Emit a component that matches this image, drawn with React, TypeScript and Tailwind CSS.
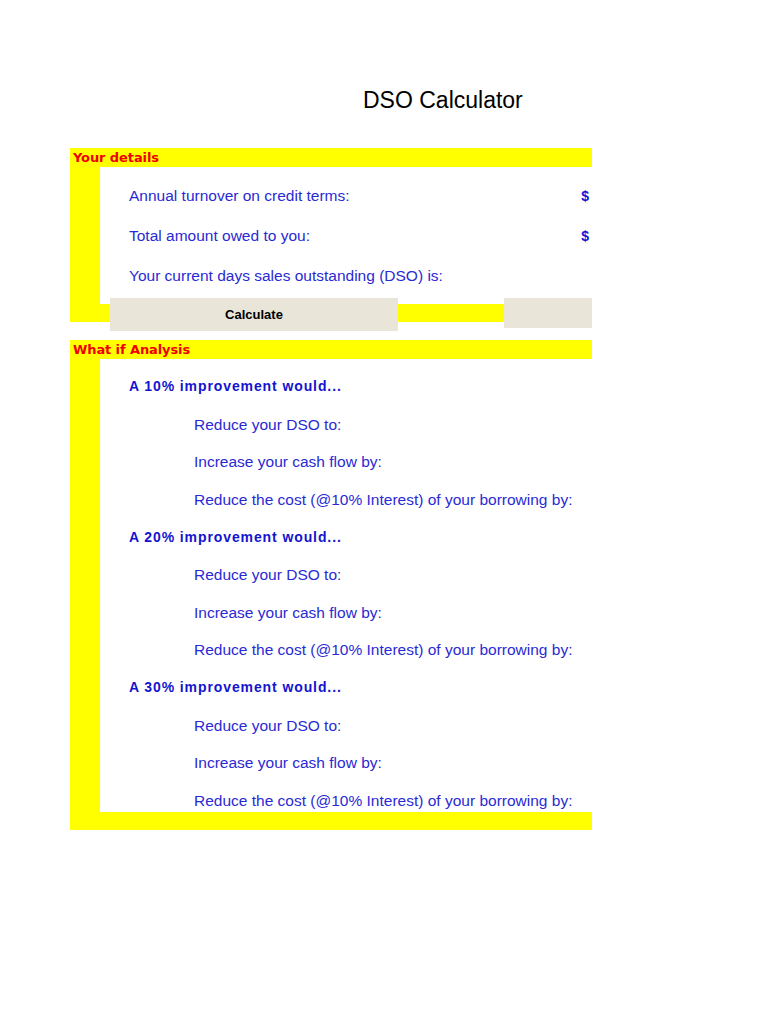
import React from "react";

const detailRows = [
  { label: "Annual turnover on credit terms:", dollar: true },
  { label: "Total amount owed to you:", dollar: true },
  { label: "Your current days sales outstanding (DSO) is:", dollar: false },
];

const improvements = ["10%", "20%", "30%"];

const outcomeRows = [
  "Reduce your DSO to:",
  "Increase your cash flow by:",
  "Reduce the cost (@10% Interest) of your borrowing by:",
];

function SectionBar({ title }: { title: string }) {
  return (
    <div className="h-[19px] bg-[#ffff00] flex items-center pl-[3px]">
      <span className="font-['DejaVu_Sans',sans-serif] text-[13px] font-bold text-[#f00000] tracking-[-0.1px]">
        {title}
      </span>
    </div>
  );
}

export default function App() {
  return (
    <div className="w-[768px] h-[1024px] bg-white font-['Liberation_Sans',Arial,sans-serif]">
      {/* Title */}
      <div className="pt-[86px] pl-[363px]">
        <h1 className="text-[23px] leading-[28px] text-black">DSO Calculator</h1>
      </div>

      <div className="ml-[70px] w-[522px] mt-[34px]">
        {/* Your details */}
        <SectionBar title="Your details" />
        <div className="flex">
          <div className="w-[30px] shrink-0 bg-[#ffff00]" />
          <div className="flex-1 flex flex-col pt-[9px] pb-[8px]">
            {detailRows.map((row) => (
              <div key={row.label} className="h-[40px] flex items-center">
                <span className="ml-[29px] text-[15.5px] text-[#2a2ad4]">{row.label}</span>
                {row.dollar && (
                  <span className="ml-auto mr-[3px] text-[14px] font-bold text-[#1414d8]">$</span>
                )}
              </div>
            ))}
          </div>
        </div>
        <div className="h-[18px] bg-[#ffff00] flex items-center">
          <button className="ml-[40px] mt-[3px] w-[288px] h-[33px] shrink-0 bg-[#e9e6d9] text-[13px] font-bold text-black">
            Calculate
          </button>
          <div className="ml-auto w-[88px] h-[30px] shrink-0 bg-[#e9e6d9]" />
        </div>

        {/* What if Analysis */}
        <div className="mt-[18px]">
          <SectionBar title="What if Analysis" />
          <div className="flex">
            <div className="w-[30px] shrink-0 bg-[#ffff00]" />
            <div className="flex-1 h-[453px] overflow-hidden flex flex-col pt-[9px]">
              {improvements.map((pct) => (
                <React.Fragment key={pct}>
                  <div className="h-[37.6px] shrink-0 flex items-center">
                    <span className="ml-[29px] text-[14px] font-bold text-[#1414d0] tracking-[0.9px]">
                      A {pct} improvement would...
                    </span>
                  </div>
                  {outcomeRows.map((label) => (
                    <div key={label} className="h-[37.6px] shrink-0 flex items-center">
                      <span className="ml-[94px] text-[15.5px] text-[#2a2ad4]">{label}</span>
                    </div>
                  ))}
                </React.Fragment>
              ))}
            </div>
          </div>
          <div className="h-[18px] bg-[#ffff00]" />
        </div>
      </div>
    </div>
  );
}
